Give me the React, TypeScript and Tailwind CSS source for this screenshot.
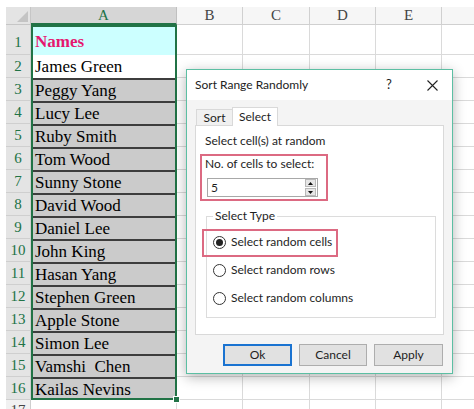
import React from "react";

const names = [
  "James Green",
  "Peggy Yang",
  "Lucy Lee",
  "Ruby Smith",
  "Tom Wood",
  "Sunny Stone",
  "David Wood",
  "Daniel Lee",
  "John King",
  "Hasan Yang",
  "Stephen Green",
  "Apple Stone",
  "Simon Lee",
  "Vamshi  Chen",
  "Kailas Nevins",
];

const otherCols = [
  { l: "B", w: "w-[66px]" },
  { l: "C", w: "w-[67px]" },
  { l: "D", w: "w-[66px]" },
  { l: "E", w: "w-[66px]" },
];

function Blank() {
  return (
    <>
      {otherCols.map((c) => (
        <div key={c.l} className={`${c.w} shrink-0 border-r border-b border-[#dadada] bg-white`}></div>
      ))}
      <div className="flex-1 border-b border-[#dadada] bg-white"></div>
    </>
  );
}

function Radio({ on, label }: { on?: boolean; label: string }) {
  return (
    <div className="h-[28px] flex items-center gap-[5px] pl-[6px]">
      <div className="w-[13px] h-[13px] rounded-full border border-[#333] bg-white flex items-center justify-center">
        {on && <div className="w-[7px] h-[7px] rounded-full bg-[#222]"></div>}
      </div>
      <span>{label}</span>
    </div>
  );
}

function Dialog() {
  return (
    <div className="absolute left-[186px] top-[69px] w-[267px] h-[305px] border border-[#5cbfa3] bg-[#f4f4f4] shadow-[0_3px_12px_rgba(0,0,0,0.3)] flex flex-col text-[12px] text-[#1e1e1e] font-['Lato',sans-serif]">
      <div className="h-[30px] bg-white flex items-center shrink-0">
        <span className="flex-1 pl-[8px] text-[#222]">Sort Range Randomly</span>
        <div className="w-[40px] flex justify-center text-[13px]">?</div>
        <div className="w-[3px]"></div>
        <div className="w-[40px] flex justify-center">
          <svg width="11" height="11" viewBox="0 0 11 11">
            <path d="M0.5 0.5 L10.5 10.5 M10.5 0.5 L0.5 10.5" stroke="#222" strokeWidth="1.1" />
          </svg>
        </div>
      </div>

      <div className="h-[25px] flex items-end px-[8px] shrink-0">
        <div className="ml-[1px] w-[36px] h-[16px] border-t border-l border-[#d9d9d9] bg-[#f0f0f0] flex items-center justify-center leading-none">
          Sort
        </div>
        <div className="relative z-10 w-[46px] h-[19px] -mb-px border-t border-l border-r border-[#d9d9d9] bg-white flex items-center justify-center leading-none">
          Select
        </div>
      </div>

      <div className="mx-[8px] h-[210px] border border-[#d9d9d9] bg-white flex flex-col shrink-0">
        <div className="mt-[7px] pl-[9px] leading-[16px]">Select cell(s) at random</div>
        <div className="mt-[5px] ml-[4px] w-[128px] h-[47px] border-2 border-[#dc6a82] flex flex-col pl-[3px]">
          <div className="leading-[16px]">No. of cells to select:</div>
          <div className="mt-[6px] ml-[2px] w-[111px] h-[19px] border border-[#a8a8a8] flex items-center">
            <span className="flex-1 pl-[3px] leading-none">5</span>
            <div className="w-[11px] h-[17px] mr-px flex flex-col gap-px">
              <div className="flex-1 bg-[#e6e6e6] border border-[#b9b9b9] flex items-center justify-center">
                <svg width="5" height="3" viewBox="0 0 5 3">
                  <path d="M0 3 L2.5 0 L5 3 Z" fill="#111" />
                </svg>
              </div>
              <div className="flex-1 bg-[#e6e6e6] border border-[#b9b9b9] flex items-center justify-center">
                <svg width="5" height="3" viewBox="0 0 5 3">
                  <path d="M0 0 L2.5 3 L5 0 Z" fill="#111" />
                </svg>
              </div>
            </div>
          </div>
        </div>

        <div className="relative mt-[15px] ml-[10px] w-[230px] h-[102px] border border-[#dcdcdc] pt-[11px]">
          <span className="absolute -top-[9px] left-[6px] bg-white px-[2px] leading-[16px]">Select Type</span>
          <div className="absolute -left-[5px] top-[12px] w-[136px] h-[28px] border-2 border-[#dc6a82]"></div>
          <Radio on label="Select random cells" />
          <Radio label="Select random rows" />
          <Radio label="Select random columns" />
        </div>
      </div>

      <div className="mt-[9px] flex justify-end gap-[7px] pr-[9px]">
        <div className="w-[69px] h-[22px] bg-[#e1e1e1] border-2 border-[#1a73d1] flex items-center justify-center">Ok</div>
        <div className="w-[68px] h-[22px] bg-[#e1e1e1] border border-[#adadad] flex items-center justify-center">Cancel</div>
        <div className="w-[69px] h-[22px] bg-[#e1e1e1] border border-[#adadad] flex items-center justify-center">Apply</div>
      </div>
    </div>
  );
}

export default function App() {
  return (
    <div className="relative w-[474px] h-[409px] overflow-hidden bg-white font-['Liberation_Serif',serif]">
      <div className="pt-[7px] pl-[6px] flex flex-col">
        {/* column headers */}
        <div className="h-[18px] flex">
          <div className="w-[25px] shrink-0 bg-[#e4e4e4] border-r border-b border-[#c6c6c6] relative">
            <svg className="absolute right-[2px] bottom-[2px]" width="11" height="11" viewBox="0 0 11 11">
              <path d="M11 0 L11 11 L0 11 Z" fill="#c4c4c4" />
            </svg>
          </div>
          <div className="w-[146px] shrink-0 bg-[#d6d6d6] border-r border-b-2 border-[#c0c0c0] border-b-[#217346] flex items-center justify-center text-[15px] text-[#217346]">
            A
          </div>
          {otherCols.map((c) => (
            <div key={c.l} className={`${c.w} shrink-0 bg-[#f6f6f6] border-r border-b border-[#d0d0d0] flex items-center justify-center text-[15px] text-[#444]`}>
              {c.l}
            </div>
          ))}
          <div className="flex-1 bg-[#f6f6f6] border-b border-[#d0d0d0]"></div>
        </div>

        {/* row 1 */}
        <div className="h-[30px] flex">
          <div className="w-[25px] shrink-0 bg-[#e4e4e4] border-r border-b border-[#cfcfcf] flex items-end justify-center pb-[1px] text-[15px] text-[#217346]">
            1
          </div>
          <div className="w-[146px] shrink-0 bg-[#ccffff] flex items-end pl-[4px] pb-[1px] text-[17px] font-bold text-[#e5176f]">
            Names
          </div>
          <Blank />
        </div>

        {names.map((n, i) => (
          <div key={n} className="h-[23px] flex">
            <div className="w-[25px] shrink-0 bg-[#e4e4e4] border-r border-b border-[#cfcfcf] flex items-center justify-center text-[15px] text-[#217346]">
              {i + 2}
            </div>
            <div
              className={
                i === 0
                  ? "w-[146px] shrink-0 bg-white flex items-center pl-[4px] text-[17px] text-black whitespace-pre"
                  : "w-[146px] shrink-0 bg-[#cbcbcb] border-t-2 border-[#3d3d3d] flex items-center pl-[4px] text-[17px] text-black whitespace-pre"
              }
            >
              {n}
            </div>
            <Blank />
          </div>
        ))}

        {/* row 17 */}
        <div className="h-[23px] flex">
          <div className="w-[25px] shrink-0 bg-[#f1f1f1] border-r border-[#cfcfcf] flex items-start justify-center pt-[1px] text-[15px] leading-[18px] text-[#444]">
            17
          </div>
          <div className="w-[146px] shrink-0 border-r border-[#dadada]"></div>
          <Blank />
        </div>
      </div>

      {/* selection outline over A1:A16 */}
      <div className="absolute left-[31px] top-[25px] w-[146px] h-[375px] border-2 border-[#217346] pointer-events-none"></div>
      <div className="absolute left-[173px] top-[396px] w-[7px] h-[7px] bg-[#217346] border border-white"></div>

      <Dialog />
    </div>
  );
}
